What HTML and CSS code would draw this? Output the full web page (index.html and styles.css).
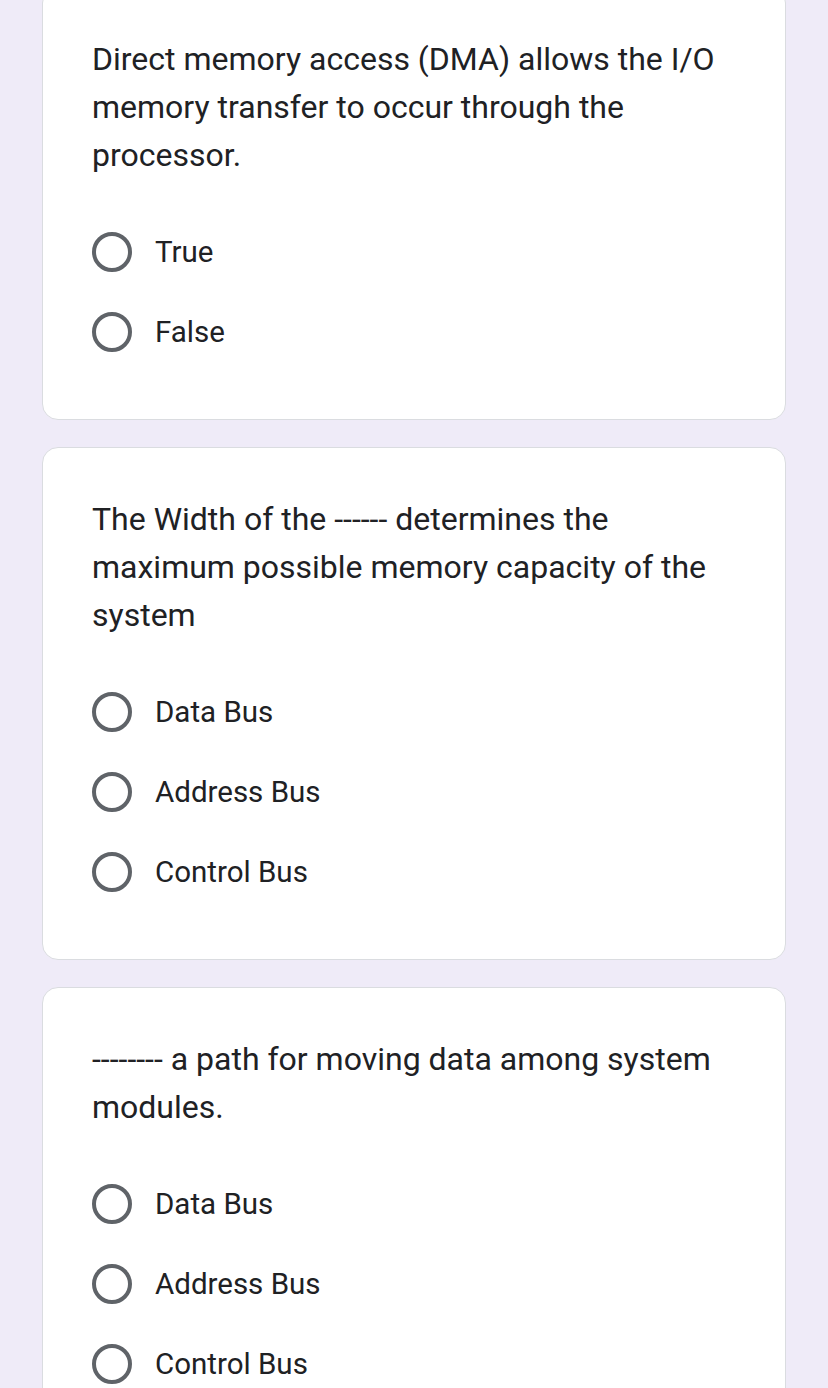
FILE: index.html
```html
<!DOCTYPE html>
<html>
<head>
<meta charset="utf-8">
<link rel="stylesheet" href="styles.css">
</head>
<body>
<div class="list">
  <div class="card">
    <div class="question">Direct memory access (DMA) allows the I/O memory transfer to occur through the processor.</div>
    <div class="options">
      <div class="option"><span class="radio"></span><span class="label">True</span></div>
      <div class="option"><span class="radio"></span><span class="label">False</span></div>
    </div>
  </div>
  <div class="card">
    <div class="question">The Width of the ------ determines the maximum possible memory capacity of the system</div>
    <div class="options">
      <div class="option"><span class="radio"></span><span class="label">Data Bus</span></div>
      <div class="option"><span class="radio"></span><span class="label">Address Bus</span></div>
      <div class="option"><span class="radio"></span><span class="label">Control Bus</span></div>
    </div>
  </div>
  <div class="card">
    <div class="question">-------- a path for moving data among system modules.</div>
    <div class="options">
      <div class="option"><span class="radio"></span><span class="label">Data Bus</span></div>
      <div class="option"><span class="radio"></span><span class="label">Address Bus</span></div>
      <div class="option"><span class="radio"></span><span class="label">Control Bus</span></div>
    </div>
  </div>
</div>
</body>
</html>
```
FILE: styles.css
```css
html, body {
  margin: 0;
  padding: 0;
  background: #efebf8;
  font-family: Roboto, "Noto Sans", sans-serif;
  color: #202124;
  height: 1388px;
  overflow: hidden;
}
.list {
  display: flex;
  flex-direction: column;
  gap: 27px;
  margin-top: -13px;
  padding: 0 42px;
}
.card {
  background: #fff;
  border: 1px solid #dadce0;
  border-radius: 16px;
  padding: 47px 48px 47px 49px;
}
.question {
  font-size: 32px;
  line-height: 48px;
  padding-right: 0;
}
.options {
  margin-top: 33px;
  display: flex;
  flex-direction: column;
}
.option {
  height: 80px;
  display: flex;
  align-items: center;
}
.radio {
  width: 32px;
  height: 32px;
  border: 4px solid #5f6368;
  border-radius: 50%;
  flex: none;
}
.label {
  margin-left: 23px;
  font-size: 29.5px;
}
```
